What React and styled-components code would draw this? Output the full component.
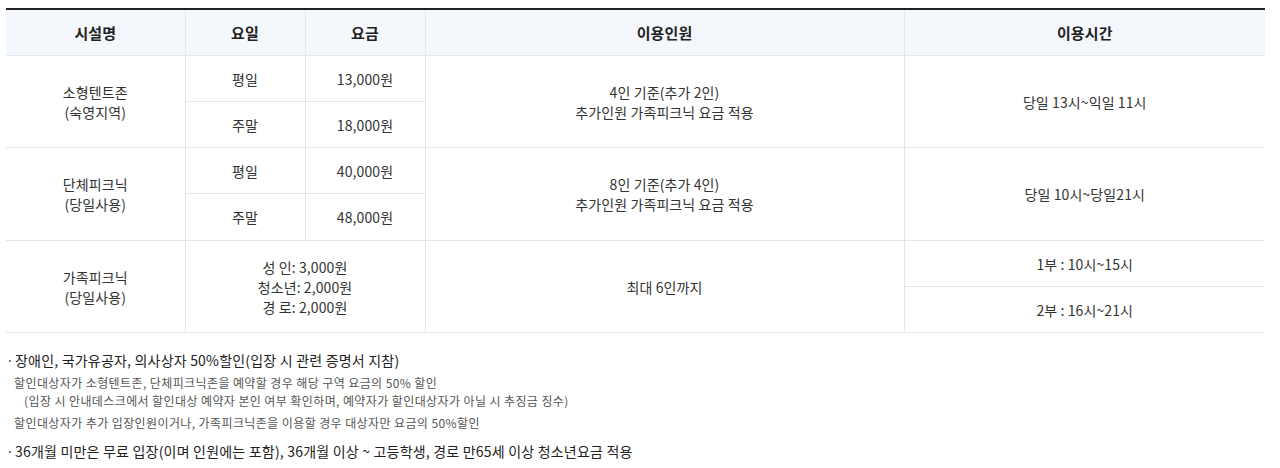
import React from "react";
import styled, { createGlobalStyle } from "styled-components";

const GlobalStyle = createGlobalStyle`
  body {
    margin: 0;
    background: #ffffff;
    font-family: "Noto Sans CJK KR", "Noto Sans", sans-serif;
    color: #333333;
  }
`;

const Page = styled.div`
  padding: 8px 15px 0 6px;
`;

const Table = styled.table`
  width: 1259px;
  border-collapse: collapse;
  border-top: 2px solid #222222;
  table-layout: fixed;
  font-size: 14px;
  letter-spacing: 0.1px;
`;

const Head = styled.th`
  height: 45px;
  padding: 0;
  background: #f4f7fb;
  border: 1px solid #e3e6ea;
  border-top: none;
  font-size: 15px;
  font-weight: 700;
  color: #222222;
  &:first-child {
    border-left: none;
  }
  &:last-child {
    border-right: none;
  }
`;

const Row = styled.tr`
  height: ${(p) => p.$h || 46}px;
`;

const Cell = styled.td`
  padding: 0;
  border: 1px solid #e3e6ea;
  text-align: center;
  vertical-align: middle;
  line-height: 20px;
  color: #333333;
  &:first-child {
    border-left: none;
  }
  &:last-child {
    border-right: none;
  }
`;

const EdgeCell = styled(Cell)`
  border-right: none;
`;

const FirstCell = styled(Cell)`
  border-left: none;
`;

const Notes = styled.ul`
  list-style: none;
  margin: 17px 0 0;
  padding: 0;
`;

const Note = styled.li`
  position: relative;
  padding-left: 9px;
  font-size: 14px;
  line-height: 20px;
  color: #222222;
  letter-spacing: 0.2px;
  &::before {
    content: "·";
    position: absolute;
    left: 0;
    top: 0;
    color: #555555;
  }
`;

const SubNote = styled.p`
  margin: 0;
  padding-left: ${(p) => (p.$indent ? 18 : 8)}px;
  font-size: 12px;
  line-height: 18px;
  color: #555555;
  letter-spacing: 0.4px;
  margin-top: ${(p) => p.$top || 0}px;
`;

const SubGroup = styled.div`
  margin: 4px 0 9px;
`;

function App() {
  return (
    <Page>
      <GlobalStyle />
      <Table>
        <colgroup>
          <col style={{ width: 179 }} />
          <col style={{ width: 120 }} />
          <col style={{ width: 120 }} />
          <col style={{ width: 479 }} />
          <col style={{ width: 361 }} />
        </colgroup>
        <thead>
          <tr>
            <Head>시설명</Head>
            <Head>요일</Head>
            <Head>요금</Head>
            <Head>이용인원</Head>
            <Head>이용시간</Head>
          </tr>
        </thead>
        <tbody>
          <Row>
            <FirstCell rowSpan={2}>
              소형텐트존
              <br />
              (숙영지역)
            </FirstCell>
            <Cell>평일</Cell>
            <Cell>13,000원</Cell>
            <Cell rowSpan={2}>
              4인 기준(추가 2인)
              <br />
              추가인원 가족피크닉 요금 적용
            </Cell>
            <EdgeCell rowSpan={2}>당일 13시~익일 11시</EdgeCell>
          </Row>
          <Row>
            <Cell>주말</Cell>
            <Cell>18,000원</Cell>
          </Row>
          <Row>
            <FirstCell rowSpan={2}>
              단체피크닉
              <br />
              (당일사용)
            </FirstCell>
            <Cell>평일</Cell>
            <Cell>40,000원</Cell>
            <Cell rowSpan={2}>
              8인 기준(추가 4인)
              <br />
              추가인원 가족피크닉 요금 적용
            </Cell>
            <EdgeCell rowSpan={2}>당일 10시~당일21시</EdgeCell>
          </Row>
          <Row $h={47}>
            <Cell>주말</Cell>
            <Cell>48,000원</Cell>
          </Row>
          <Row>
            <FirstCell rowSpan={2}>
              가족피크닉
              <br />
              (당일사용)
            </FirstCell>
            <Cell colSpan={2} rowSpan={2}>
              성 인: 3,000원
              <br />
              청소년: 2,000원
              <br />
              경 로: 2,000원
            </Cell>
            <Cell rowSpan={2}>최대 6인까지</Cell>
            <EdgeCell>1부 : 10시~15시</EdgeCell>
          </Row>
          <Row>
            <EdgeCell>2부 : 16시~21시</EdgeCell>
          </Row>
        </tbody>
      </Table>

      <Notes>
        <Note>장애인, 국가유공자, 의사상자 50%할인(입장 시 관련 증명서 지참)</Note>
        <SubGroup>
          <SubNote>
            할인대상자가 소형텐트존, 단체피크닉존을 예약할 경우 해당 구역 요금의 50% 할인
          </SubNote>
          <SubNote $indent>
            (입장 시 안내데스크에서 할인대상 예약자 본인 여부 확인하며, 예약자가 할인대상자가 아닐 시 추징금 징수)
          </SubNote>
          <SubNote $top={4}>
            할인대상자가 추가 입장인원이거나, 가족피크닉존을 이용할 경우 대상자만 요금의 50%할인
          </SubNote>
        </SubGroup>
        <Note>
          36개월 미만은 무료 입장(이며 인원에는 포함), 36개월 이상 ~ 고등학생, 경로 만65세 이상 청소년요금 적용
        </Note>
      </Notes>
    </Page>
  );
}

export default App;
